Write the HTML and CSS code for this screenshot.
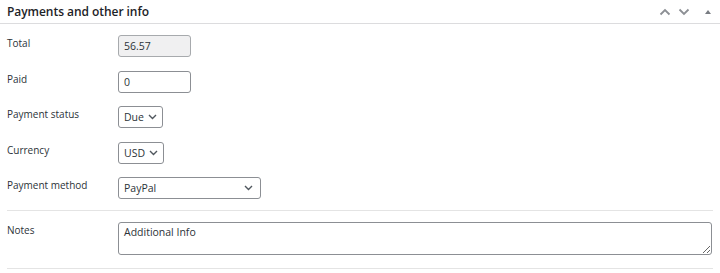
FILE: index.html
```html
<!DOCTYPE html>
<html>
<head>
<meta charset="utf-8">
<link rel="stylesheet" href="styles.css">
</head>
<body>
<div class="box">
  <div class="box-header">
    <h2 class="box-title">Payments and other info</h2>
    <div class="box-actions">
      <svg class="act act-up" width="12" height="8" viewBox="0 0 12 8"><path d="M1.5 6.5 L6 2 L10.5 6.5" fill="none" stroke="#8c8f94" stroke-width="1.8"/></svg>
      <svg class="act act-down" width="12" height="8" viewBox="0 0 12 8"><path d="M1.5 1.5 L6 6 L10.5 1.5" fill="none" stroke="#8c8f94" stroke-width="1.8"/></svg>
      <svg class="act act-toggle" width="8" height="6" viewBox="0 0 8 6"><path d="M1 5 L4 1 L7 5 Z" fill="#787c82"/></svg>
    </div>
  </div>
  <div class="box-body">
    <div class="fields">
      <div class="row">
        <div class="label">Total</div>
        <input class="input input-short input-readonly" type="text" value="56.57" readonly>
      </div>
      <div class="row">
        <div class="label">Paid</div>
        <input class="input input-short" type="text" value="0">
      </div>
      <div class="row">
        <div class="label">Payment status</div>
        <div class="select select-due"><span>Due</span><svg width="9" height="6" viewBox="0 0 9 6"><path d="M1 1 L4.5 4.5 L8 1" fill="none" stroke="#50575e" stroke-width="1.4"/></svg></div>
      </div>
      <div class="row">
        <div class="label">Currency</div>
        <div class="select select-usd"><span>USD</span><svg width="9" height="6" viewBox="0 0 9 6"><path d="M1 1 L4.5 4.5 L8 1" fill="none" stroke="#50575e" stroke-width="1.4"/></svg></div>
      </div>
      <div class="row">
        <div class="label">Payment method</div>
        <div class="select select-method"><span>PayPal</span><svg width="9" height="6" viewBox="0 0 9 6"><path d="M1 1 L4.5 4.5 L8 1" fill="none" stroke="#50575e" stroke-width="1.4"/></svg></div>
      </div>
    </div>
    <div class="notes">
      <div class="row">
        <div class="label">Notes</div>
        <textarea class="textarea">Additional Info</textarea>
      </div>
    </div>
  </div>
</div>
</body>
</html>
```
FILE: styles.css
```css
html, body {
  margin: 0;
  padding: 0;
  background: #ffffff;
}
body {
  font-family: "Open Sans", "Noto Sans", "Liberation Sans", sans-serif;
  color: #1d2327;
  width: 720px;
  height: 273px;
  overflow: hidden;
}
.box-header {
  height: 23px;
  border-bottom: 1px solid #dcdcde;
  display: flex;
  align-items: center;
  justify-content: space-between;
}
.box-title {
  margin: 0;
  padding-left: 7px;
  font-size: 12px;
  font-weight: 600;
  line-height: 16px;
  color: #1d2327;
  letter-spacing: -0.05px;
}
.box-actions {
  display: flex;
  align-items: center;
  padding-right: 8px;
  height: 23px;
}
.act { display: block; }
.act-up { margin-right: 7px; }
.act-down { margin-right: 14px; }
.box-body {
  padding: 0 7px;
}
.fields {
  padding-top: 11px;
  padding-bottom: 11px;
  display: flex;
  flex-direction: column;
  gap: 13.5px;
  border-bottom: 1px solid #e4e4e4;
}
.row {
  display: flex;
  align-items: flex-start;
}
.label {
  width: 111px;
  flex: none;
  font-size: 10px;
  line-height: 16px;
  color: #2c3338;
}
.input {
  box-sizing: border-box;
  height: 22px;
  margin: 0;
  border: 1px solid #8c8f94;
  border-radius: 3px;
  padding: 0 5px;
  font-family: inherit;
  font-size: 10.5px;
  color: #2c3338;
  background: #fff;
  outline: none;
}
.input-short { width: 73px; }
.input-readonly {
  background: #f0f0f1;
  border-color: #a7aaad;
}
.select {
  box-sizing: border-box;
  height: 22px;
  border: 1px solid #8c8f94;
  border-radius: 3px;
  padding: 0 5px;
  font-size: 10.5px;
  color: #2c3338;
  display: flex;
  align-items: center;
  justify-content: space-between;
  background: #fff;
}
.select svg { display: block; }
.select-due { width: 45px; }
.select-usd { width: 46px; }
.select-method { width: 143px; padding-right: 7px; }
.notes {
  padding-top: 11px;
  padding-bottom: 13px;
  border-bottom: 1px solid #e4e4e4;
}
.textarea {
  box-sizing: border-box;
  width: 594px;
  height: 33px;
  margin: 0;
  border: 1px solid #8c8f94;
  border-radius: 3px;
  padding: 2px 5px;
  font-family: inherit;
  font-size: 10.5px;
  line-height: 14px;
  color: #2c3338;
  outline: none;
}
```
